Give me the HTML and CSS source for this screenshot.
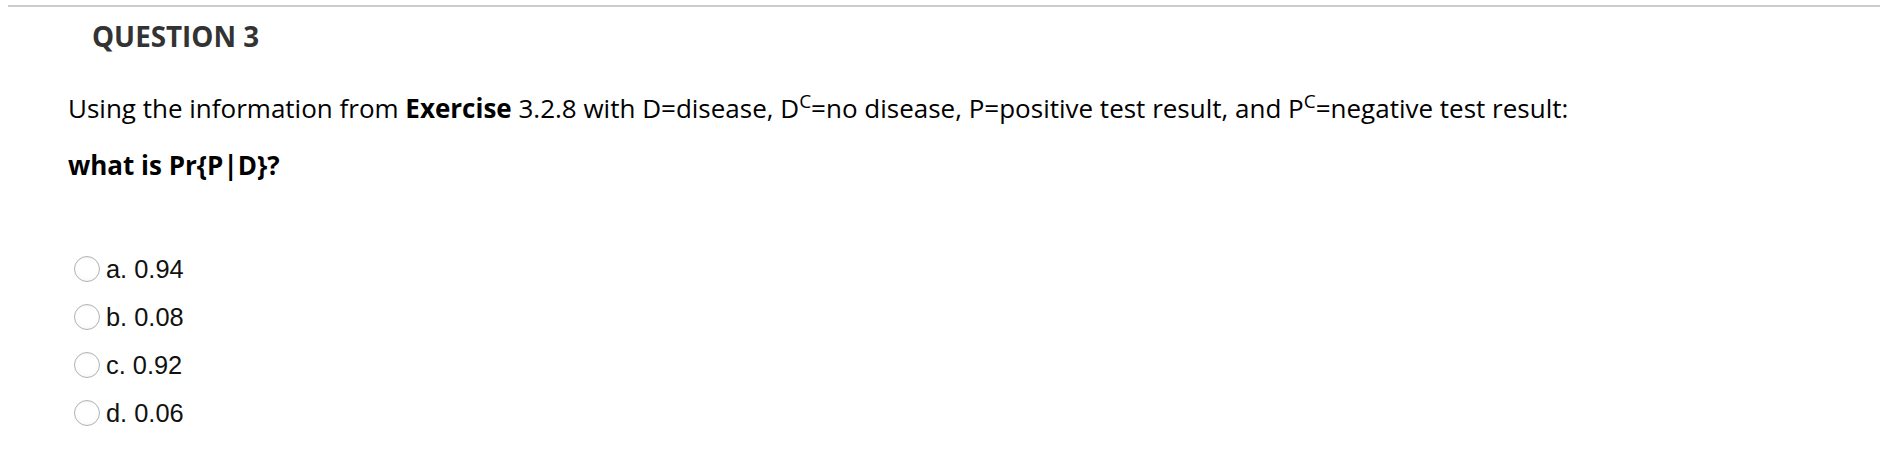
FILE: index.html
```html
<!DOCTYPE html>
<html lang="en">
<head>
<meta charset="utf-8">
<title>Question 3</title>
<link rel="stylesheet" href="styles.css">
</head>
<body>
<div class="rule"></div>
<h2 class="qtitle">QUESTION 3</h2>
<div class="qbody">
  <p class="stem">Using the information from <b>Exercise</b> 3.2.8 with D=disease, D<sup>C</sup>=no disease, P=positive test result, and P<sup>C</sup>=negative test result:</p>
  <p class="ask"><b>what is Pr{P|D}?</b></p>
  <ul class="answers">
    <li class="opt"><span class="radio"></span><span class="lbl">a. 0.94</span></li>
    <li class="opt"><span class="radio"></span><span class="lbl">b. 0.08</span></li>
    <li class="opt"><span class="radio"></span><span class="lbl">c. 0.92</span></li>
    <li class="opt"><span class="radio"></span><span class="lbl">d. 0.06</span></li>
  </ul>
</div>
</body>
</html>
```
FILE: styles.css
```css
html, body {
  margin: 0;
  padding: 0;
  background: #ffffff;
}
body {
  font-family: "Open Sans", "Liberation Sans", sans-serif;
  color: #000;
}
.rule {
  margin: 5px 0 0 8px;
  height: 2px;
  background: #cccccc;
}
.qtitle {
  margin: 0;
  padding: 10px 0 0 92px;
  font-size: 27.8px;
  line-height: 38px;
  font-weight: 700;
  color: #333333;
}
.qbody {
  padding-left: 68px;
}
.stem {
  margin: 0;
  padding-top: 35px;
  font-size: 26px;
  line-height: 36px;
}
.stem b {
  font-weight: 700;
}
.stem sup {
  font-size: 19px;
  line-height: 0;
  vertical-align: 10px;
}
.ask {
  margin: 0;
  padding-top: 21px;
  font-size: 26px;
  line-height: 36px;
}
.answers {
  list-style: none;
  margin: 0;
  padding: 62px 0 0 6px;
}
.opt {
  display: flex;
  align-items: center;
  height: 48px;
}
.radio {
  width: 24px;
  height: 24px;
  border-radius: 50%;
  border: 1px solid #b3b3b3;
  background: radial-gradient(circle at 50% 35%, #ffffff 55%, #f1f1f1 100%);
  box-shadow: inset 0 1px 1px rgba(0,0,0,0.06);
  flex: none;
}
.lbl {
  margin-left: 6px;
  font-family: "Liberation Sans", Arial, sans-serif;
  font-size: 25.4px;
  color: #111;
}
```
